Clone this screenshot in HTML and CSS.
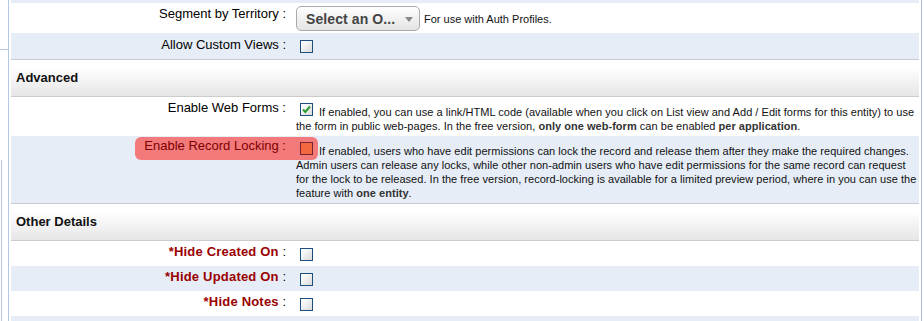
FILE: index.html
```html
<!DOCTYPE html>
<html>
<head>
<meta charset="utf-8">
<link rel="stylesheet" href="styles.css">
</head>
<body>
<div class="page">
  <div class="lgutter">
    <div class="lbox"></div>
    <div class="lgap"></div>
    <div class="lpanel"></div>
  </div>
  <div class="main">
    <div class="strip alt"></div>
    <div class="row r-seg">
      <div class="lbl">Segment by Territory :</div>
      <div class="fld fld-seg">
        <div class="select"><span class="sel-text">Select an O...</span><span class="sel-arrow"></span></div>
        <span class="note">For use with Auth Profiles.</span>
      </div>
    </div>
    <div class="row r-cb alt sep">
      <div class="lbl">Allow Custom Views :</div>
      <div class="fld"><span class="cb blk"></span></div>
    </div>
    <div class="section">Advanced</div>
    <div class="row r-desc">
      <div class="lbl">Enable Web Forms :</div>
      <div class="fld desc"><span class="cb inl checked"><svg viewBox="0 0 11 11" width="11" height="11"><path d="M2 5.5 L4.3 8 L9 2.5" fill="none" stroke="#2f9a2f" stroke-width="2"/></svg></span>If enabled, you can use a link/HTML code (available when you click on List view and Add / Edit forms for this entity) to use<br>the form in public web-pages. In the free version, <b>only one web-form</b> can be enabled <b>per application</b>.</div>
    </div>
    <div class="row r-desc r-lock alt sep">
      <div class="hl"></div>
      <div class="lbl lock-lbl">Enable Record Locking :</div>
      <div class="fld desc"><span class="cb inl lockcb"></span>If enabled, users who have edit permissions can lock the record and release them after they make the required changes.<br>Admin users can release any locks, while other non-admin users who have edit permissions for the same record can request<br>for the lock to be released. In the free version, record-locking is available for a limited preview period, where in you can use the<br>feature with <b>one entity</b>.</div>
    </div>
    <div class="section">Other Details</div>
    <div class="row r-hide">
      <div class="lbl"><span class="req">*Hide Created On</span> :</div>
      <div class="fld"><span class="cb blk"></span></div>
    </div>
    <div class="row r-hide alt">
      <div class="lbl"><span class="req">*Hide Updated On</span> :</div>
      <div class="fld"><span class="cb blk"></span></div>
    </div>
    <div class="row r-hide">
      <div class="lbl"><span class="req">*Hide Notes</span> :</div>
      <div class="fld"><span class="cb blk"></span></div>
    </div>
    <div class="row r-hide alt"></div>
  </div>
  <div class="rgutter"></div>
</div>
</body>
</html>
```
FILE: styles.css
```css
html, body {
  margin: 0;
  padding: 0;
  background: #fff;
}
body {
  font-family: "Liberation Sans", Arial, sans-serif;
  color: #000;
}
.page {
  display: flex;
  width: 924px;
  height: 321px;
  overflow: hidden;
}
.lgutter {
  width: 8px;
  border-right: 1px solid #b4c8e6;
  margin-right: 2px;
  display: flex;
  flex-direction: column;
  flex: none;
}
.lbox {
  height: 49px;
  border-bottom: 1px solid #b4c8e6;
  background: #fff;
}
.lgap {
  height: 110px;
}
.lpanel {
  flex: 1;
  border-left: 1px solid #b4c8e6;
  margin-left: 1px;
}
.main {
  width: 908px;
  flex: none;
  display: flex;
  flex-direction: column;
}
.rgutter {
  width: 1px;
  margin-left: 2px;
  background: #a9bedd;
  flex: none;
}
.alt {
  background: #e6edf7;
}
.strip {
  height: 3px;
  flex: none;
}
.row {
  display: flex;
  flex: none;
  position: relative;
}
.sep {
  border-bottom: 1px solid #c5cbd5;
}
.lbl {
  width: 285px;
  box-sizing: border-box;
  padding-right: 10px;
  text-align: right;
  font-size: 13px;
  line-height: 14px;
  white-space: nowrap;
  flex: none;
  position: relative;
}
.fld {
  flex: 1;
  position: relative;
}
.r-seg {
  height: 30px;
}
.r-seg .lbl {
  padding-top: 4px;
}
.fld-seg {
  display: flex;
  align-items: center;
  padding-top: 3px;
  height: 25px;
}
.select {
  width: 124px;
  height: 25px;
  box-sizing: border-box;
  border: 1px solid #aaa;
  border-radius: 5px;
  background: linear-gradient(#ffffff, #eeeeee 60%, #e4e4e4);
  display: flex;
  align-items: center;
  position: relative;
  flex: none;
}
.sel-text {
  font-weight: bold;
  font-size: 14px;
  color: #444;
  margin-left: 9px;
  letter-spacing: 0.1px;
}
.sel-arrow {
  position: absolute;
  right: 6px;
  top: 10px;
  width: 0;
  height: 0;
  border-left: 4px solid transparent;
  border-right: 4px solid transparent;
  border-top: 5px solid #888;
}
.note {
  font-size: 11px;
  color: #111;
  margin-left: 4px;
  margin-top: 1px;
}
.r-cb {
  height: 26px;
}
.r-cb .lbl {
  padding-top: 5px;
}
.cb {
  width: 13px;
  height: 13px;
  box-sizing: border-box;
  border: 1px solid #1d4e7e;
  background: linear-gradient(135deg, #ffffff 10%, #dedede 90%);
  margin-left: 4px;
}
.cb.blk {
  display: block;
  margin-top: 7px;
}
.cb.inl {
  display: inline-block;
  vertical-align: baseline;
  margin-right: 6px;
  position: relative;
}
.cb.inl svg {
  position: absolute;
  left: 0;
  top: 0;
}
.section {
  flex: none;
  box-sizing: border-box;
  background: linear-gradient(#ffffff 20%, #f4f4f4 55%, #e6e6e6);
  border-bottom: 1px solid #cccccc;
  height: 37px;
  font-weight: bold;
  font-size: 13px;
  line-height: 36px;
  padding-left: 5px;
  color: #111;
}
.r-desc .lbl {
  padding-top: 4px;
}
.desc {
  font-size: 11px;
  line-height: 14px;
  color: #111;
  white-space: nowrap;
  padding-top: 6px;
  padding-bottom: 3px;
  letter-spacing: 0.03px;
}
.desc b {
  color: #333;
}
.r-lock .lbl {
  padding-top: 3px;
}
.hl {
  position: absolute;
  left: 124px;
  top: 1px;
  width: 183px;
  height: 23px;
  border-radius: 6px;
  background: #f37a7b;
}
.lock-lbl {
  color: #7d0000;
}
.cb.lockcb {
  border-color: #7a2432;
  background: #f4683f;
}
.r-hide {
  height: 25px;
}
.r-hide .lbl {
  padding-top: 4px;
}
.req {
  color: #9a0000;
  font-weight: bold;
  font-size: 13px;
  letter-spacing: 0.2px;
}
```
